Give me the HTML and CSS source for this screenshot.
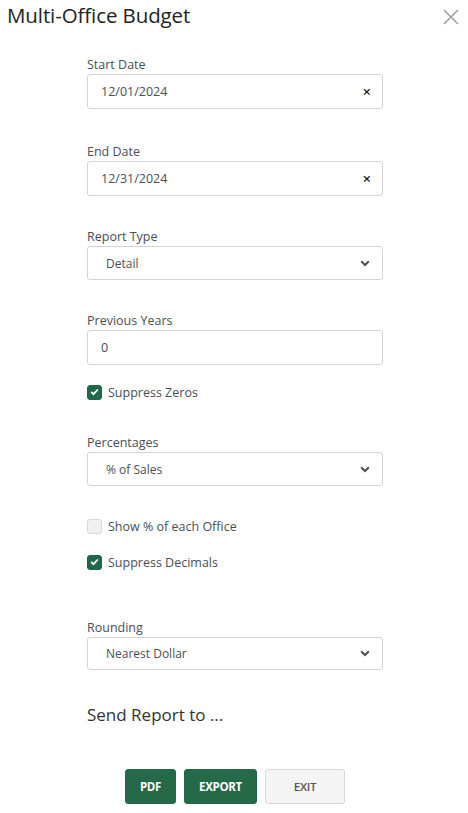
FILE: index.html
```html
<!DOCTYPE html>
<html>
<head>
<meta charset="utf-8">
<link rel="stylesheet" href="styles.css">
</head>
<body>
<div class="dialog">
  <header class="head">
    <h1 class="title">Multi-Office Budget</h1>
    <button class="close" aria-label="Close">
      <svg width="16" height="16" viewBox="0 0 16 16"><path d="M1 1L15 15M15 1L1 15" stroke="#a0a0a0" stroke-width="1.6" fill="none"/></svg>
    </button>
  </header>
  <form class="form">
    <div class="field f-start">
      <label class="lbl">Start Date</label>
      <div class="input"><span class="val">12/01/2024</span><span class="clear">×</span></div>
    </div>
    <div class="field f-gap">
      <label class="lbl">End Date</label>
      <div class="input"><span class="val">12/31/2024</span><span class="clear">×</span></div>
    </div>
    <div class="field f-gap2">
      <label class="lbl">Report Type</label>
      <div class="input select"><span class="val sv">Detail</span><svg class="chev" width="10" height="7" viewBox="0 0 10 7"><path d="M1.2 1.3L5 5L8.8 1.3" stroke="#4a4f55" stroke-width="2" fill="none"/></svg></div>
    </div>
    <div class="field f-gap2">
      <label class="lbl">Previous Years</label>
      <div class="input"><span class="val">0</span></div>
    </div>
    <div class="check c-first"><span class="box on"><svg width="9" height="8" viewBox="0 0 9 8"><path d="M1.2 4L3.5 6.2L7.8 1.5" stroke="#fff" stroke-width="1.8" fill="none"/></svg></span><span class="ctext">Suppress Zeros</span></div>
    <div class="field f-gap3">
      <label class="lbl">Percentages</label>
      <div class="input select"><span class="val sv">% of Sales</span><svg class="chev" width="10" height="7" viewBox="0 0 10 7"><path d="M1.2 1.3L5 5L8.8 1.3" stroke="#4a4f55" stroke-width="2" fill="none"/></svg></div>
    </div>
    <div class="check c-second"><span class="box"></span><span class="ctext">Show % of each Office</span></div>
    <div class="check c-third"><span class="box on"><svg width="9" height="8" viewBox="0 0 9 8"><path d="M1.2 4L3.5 6.2L7.8 1.5" stroke="#fff" stroke-width="1.8" fill="none"/></svg></span><span class="ctext">Suppress Decimals</span></div>
    <div class="field f-round">
      <label class="lbl">Rounding</label>
      <div class="input select s-round"><span class="val sv">Nearest Dollar</span><svg class="chev" width="10" height="7" viewBox="0 0 10 7"><path d="M1.2 1.3L5 5L8.8 1.3" stroke="#4a4f55" stroke-width="2" fill="none"/></svg></div>
    </div>
    <div class="send">Send Report to ...</div>
    <div class="actions">
      <button type="button" class="btn primary b-pdf">PDF</button>
      <button type="button" class="btn primary b-export">EXPORT</button>
      <button type="button" class="btn ghost b-exit">EXIT</button>
    </div>
  </form>
</div>
</body>
</html>
```
FILE: styles.css
```css
* { box-sizing: border-box; }
html, body { margin: 0; padding: 0; background: #fff; }
body { font-family: "Open Sans", "Noto Sans", sans-serif; color: #4a4f55; width: 468px; }
.dialog { padding: 0 0 0 7px; }
.head { display: flex; justify-content: space-between; align-items: flex-start; height: 40px; }
.title { margin: 0; font-size: 20.5px; font-weight: 400; color: #222; line-height: 30px; letter-spacing: -0.1px; }
.close { border: 0; background: none; padding: 0; margin: 9px 9px 0 0; width: 16px; height: 16px; display: flex; }
.form { display: flex; flex-direction: column; margin-left: 80px; width: 296px; }
.field { display: flex; flex-direction: column; }
.f-start { margin-top: 16px; }
.f-gap { margin-top: 34px; }
.f-gap2 { margin-top: 32px; }
.f-gap3 { margin-top: 32px; }
.f-round { margin-top: 47px; }
.lbl { font-size: 12.5px; line-height: 18px; color: #4a4f55; }
.input { height: 35px; border: 1px solid #d2d5d8; border-radius: 3px; display: flex; align-items: center; padding: 0 11px 0 13px; justify-content: space-between; }
.select { height: 34px; padding-left: 18px; }
.s-round { height: 33px; }
.val { font-size: 12.5px; color: #4a4f55; }
.sv { font-size: 12px; }
.clear { font-size: 15px; color: #222; font-weight: 600; line-height: 1; }
.chev { margin-right: 1px; }
.check { display: flex; align-items: center; height: 20px; }
.c-first { margin-top: 17px; }
.c-second { margin-top: 30px; }
.c-third { margin-top: 16px; }
.box { width: 15px; height: 15px; border-radius: 3px; border: 1px solid #d6d8da; background: #f1f1f1; display: flex; align-items: center; justify-content: center; margin-right: 6px; }
.box.on { background: #21674a; border-color: #21674a; }
.ctext { font-size: 12.5px; color: #4a4f55; }
.send { margin-top: 33px; font-size: 17px; color: #333; line-height: 24px; }
.actions { display: flex; gap: 8px; margin-top: 42px; margin-left: 38px; }
.btn { height: 35px; border-radius: 3px; font-family: "Open Sans", sans-serif; font-size: 11.5px; font-weight: 700; letter-spacing: -0.3px; padding: 0; }
.primary { background: #246a49; color: #fff; border: 1px solid #246a49; }
.ghost { background: #f4f4f4; color: #555; border: 1px solid #d8d8d8; font-weight: 600; }
.b-pdf { width: 51px; }
.b-export { width: 73px; }
.b-exit { width: 80px; }
```
